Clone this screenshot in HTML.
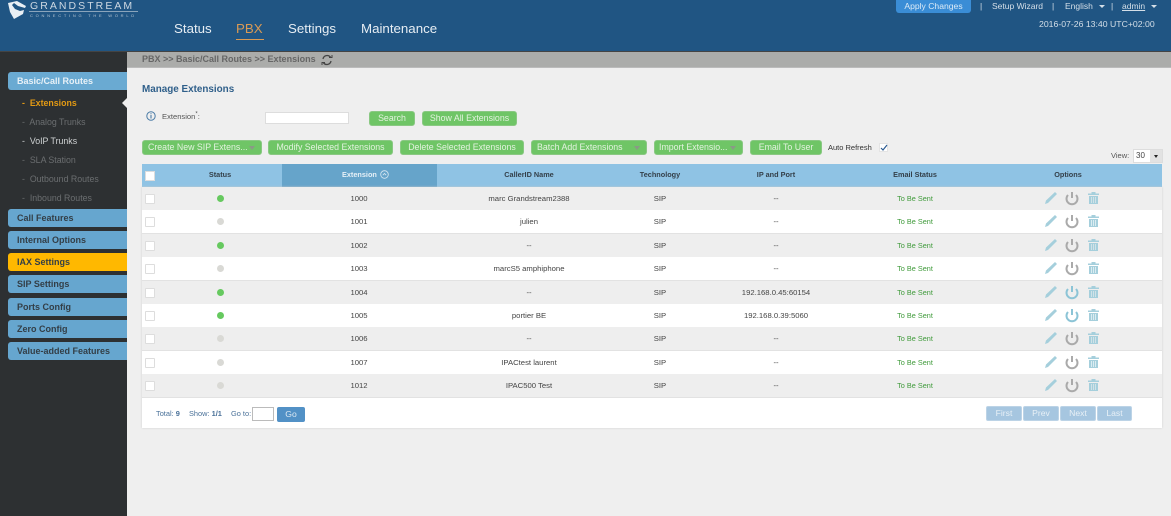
<!DOCTYPE html>
<html><head><meta charset="utf-8">
<style>
html,body{margin:0;padding:0;width:1171px;height:516px;overflow:hidden;background:#efefef;font-family:"Liberation Sans",sans-serif}
.a{position:absolute;white-space:nowrap}
#hd{left:0;top:0;width:1171px;height:51px;background:#205583;border-bottom:1px solid #444}
#sb{left:0;top:52px;width:127px;height:464px;background:#2d3032}
#bc{left:127px;top:52px;width:1044px;height:15px;background:#abacaa;border-bottom:1px solid #bbb;font-size:9px;font-weight:bold;color:#666;line-height:15px;text-indent:15px}
.nav{font-size:13.3px;color:#e6edf3;top:21px;line-height:16px}
.tp{font-size:8.5px;color:#d5dfe8;top:0;line-height:12px}
.m{left:8px;width:119px;height:18px;background:#66a6cf;border-radius:3px 0 0 3px;font-size:9px;font-weight:bold;color:#333e46;line-height:18px;text-indent:9px}
.s{left:22px;font-size:8.8px;color:#6b6e70;line-height:12px}
.b{height:13px;background:#6fc566;border:1px solid #8ac883;border-radius:3px;color:#e3f2df;font-size:8.8px;line-height:13px;text-align:center}
.ar{position:absolute;right:6px;top:5px;width:0;height:0;border-left:3px solid transparent;border-right:3px solid transparent;border-top:4px solid #8a9a86}
.r{left:142px;width:1020px;height:23px;border-bottom:1px solid #e2e2e2}
.g{background:#eee}.w{background:#fff}
.c{position:absolute;top:0;line-height:23px;font-size:7.7px;color:#444;text-align:center;transform:translateX(-50%);white-space:nowrap}
.e{color:#3f9a3a;font-size:7.3px}
.cb{position:absolute;left:3px;top:7px;width:8px;height:8px;background:#fff;border:1px solid #ddd;border-radius:1px}
.d{position:absolute;left:75px;top:8px;width:7px;height:7px;border-radius:50%}
.on{background:#66c95f}.off{background:#d9d9d5}
.h{font-size:7.3px;font-weight:bold;color:#34404a;line-height:22px;top:164px;transform:translateX(-50%)}
.p{height:13px;background:#a6c6e0;border:1px solid #bcd3e6;border-radius:2px;color:#e8f0f6;font-size:8.6px;line-height:13px;text-align:center;top:406px}
.ft{font-size:7.4px;color:#4a7199;line-height:11px;top:408px}
svg.ic{position:absolute;left:902px;top:3px}
</style></head><body>
<div class="a" id="hd"></div>
<svg class="a" style="left:7px;top:0" width="20" height="20" viewBox="0 0 20 20"><path d="M1 3 L10 1 L19 6 L18 8 L11 6 L7 3 L5 5 L8 9 L13 11 L17 10 L16 14 L7 19 L3 12 Z" fill="#e9eff4"/></svg>
<div class="a" style="left:30px;top:0;font-size:10.5px;letter-spacing:2.05px;color:#cdd8e2;line-height:13px">GRANDSTREAM</div>
<div class="a" style="left:29px;top:11px;width:109px;height:1px;background:#8aa4bb"></div>
<div class="a" style="left:30px;top:13px;font-size:4px;letter-spacing:2.75px;color:#b5c5d3;line-height:5px">CONNECTING THE WORLD</div>
<div class="a nav" style="left:174px">Status</div>
<div class="a nav" style="left:236px;color:#d99a55">PBX</div>
<div class="a" style="left:236px;top:39px;width:28px;height:1px;background:#d99a55"></div>
<div class="a nav" style="left:288px">Settings</div>
<div class="a nav" style="left:361px">Maintenance</div>
<div class="a" style="left:896px;top:0;width:75px;height:13px;background:#3a8dd6;border-radius:0 0 3px 3px;color:#dcebf7;font-size:8.6px;line-height:12px;text-align:center">Apply Changes</div>
<div class="a tp" style="left:980px">|</div>
<div class="a tp" style="left:992px">Setup Wizard</div>
<div class="a tp" style="left:1052px">|</div>
<div class="a tp" style="left:1065px">English</div>
<div class="a" style="left:1099px;top:5px;border-left:3px solid transparent;border-right:3px solid transparent;border-top:3px solid #d5dfe8"></div>
<div class="a tp" style="left:1111px">|</div>
<div class="a tp" style="left:1122px;text-decoration:underline">admin</div>
<div class="a" style="left:1151px;top:5px;border-left:3px solid transparent;border-right:3px solid transparent;border-top:3px solid #d5dfe8"></div>
<div class="a tp" style="left:1039px;top:18px;font-size:8.7px">2016-07-26 13:40 UTC+02:00</div>

<div class="a" id="sb"></div>
<div class="a" id="bc">PBX &gt;&gt; Basic/Call Routes &gt;&gt; Extensions</div>
<svg class="a" style="left:321px;top:54px" width="12" height="12" viewBox="0 0 12 12" fill="none" stroke="#444" stroke-width="1.3"><path d="M2 5 A4.2 4.2 0 0 1 9.5 3.2"/><path d="M10 7 A4.2 4.2 0 0 1 2.5 8.8"/><path d="M8 3.500h3v-2.500" stroke-width="1"/><path d="M4 8.500H1v2.500" stroke-width="1"/></svg>

<div class="a m" style="top:72px;background:#6aaad2;color:#e8f1f7">Basic/Call Routes</div>
<div class="a s" style="top:97px;color:#e39a14;font-weight:bold">-&nbsp; Extensions</div>
<div class="a" style="left:122px;top:98px;border-top:5px solid transparent;border-bottom:5px solid transparent;border-right:5px solid #efefef"></div>
<div class="a s" style="top:116px">-&nbsp; Analog Trunks</div>
<div class="a s" style="top:135px;color:#cfd2d3">-&nbsp; VoIP Trunks</div>
<div class="a s" style="top:154px">-&nbsp; SLA Station</div>
<div class="a s" style="top:173px">-&nbsp; Outbound Routes</div>
<div class="a s" style="top:192px">-&nbsp; Inbound Routes</div>
<div class="a m" style="top:209px">Call Features</div>
<div class="a m" style="top:231px">Internal Options</div>
<div class="a m" style="top:253px;background:#ffb800">IAX Settings</div>
<div class="a m" style="top:275px">SIP Settings</div>
<div class="a m" style="top:298px">Ports Config</div>
<div class="a m" style="top:320px">Zero Config</div>
<div class="a m" style="top:342px">Value-added Features</div>

<div class="a" style="left:142px;top:83px;font-size:9.9px;font-weight:bold;color:#2f5f8a;line-height:13px">Manage Extensions</div>
<svg class="a" style="left:146px;top:111px" width="10" height="10" viewBox="0 0 10 10"><circle cx="5" cy="5" r="4.2" fill="none" stroke="#4a7ba6"/><path d="M5 4v3.500M5 2.200v1" stroke="#4a7ba6" stroke-width="1.100"/></svg>
<div class="a" style="left:162px;top:111px;font-size:7.6px;color:#555;line-height:11px">Extension<sup style="font-size:6px;line-height:0">*</sup>:</div>
<div class="a" style="left:265px;top:112px;width:82px;height:10px;background:#fff;border:1px solid #ddd"></div>
<div class="a b" style="left:369px;top:111px;width:44px">Search</div>
<div class="a b" style="left:422px;top:111px;width:93px">Show All Extensions</div>

<div class="a b" style="left:142px;top:140px;width:118px;text-align:left;text-indent:5px">Create New SIP Extens...<i class="ar"></i></div>
<div class="a b" style="left:268px;top:140px;width:123px">Modify Selected Extensions</div>
<div class="a b" style="left:400px;top:140px;width:122px">Delete Selected Extensions</div>
<div class="a b" style="left:531px;top:140px;width:114px;text-align:left;text-indent:5px">Batch Add Extensions<i class="ar"></i></div>
<div class="a b" style="left:654px;top:140px;width:87px;text-align:left;text-indent:4px">Import Extensio...<i class="ar"></i></div>
<div class="a b" style="left:750px;top:140px;width:70px">Email To User</div>
<div class="a" style="left:828px;top:142px;font-size:7.500px;color:#333;line-height:11px">Auto Refresh</div>
<div class="a" style="left:879px;top:143px;width:7px;height:7px;background:#fff;border:1px solid #e4e4e4"></div>
<svg class="a" style="left:880px;top:144px" width="8" height="8" viewBox="0 0 8 8"><path d="M1 4l2 2 4-5" fill="none" stroke="#2c5c92" stroke-width="1.200"/></svg>
<div class="a" style="left:1111px;top:150px;font-size:7.500px;color:#555;line-height:11px">View:</div>
<div class="a" style="left:1133px;top:149px;width:28px;height:12px;background:#fff;border:1px solid #ddd;font-size:8px;color:#444;line-height:12px;text-indent:2px">30</div>
<div class="a" style="left:1150px;top:150px;width:12px;height:12px;background:#e2e2e2"></div>
<div class="a" style="left:1154px;top:155px;border-left:2.500px solid transparent;border-right:2.500px solid transparent;border-top:3px solid #222"></div>

<div class="a" style="left:142px;top:164px;width:1020px;height:23px;background:#8fc3e4"></div>
<div class="a" style="left:282px;top:164px;width:155px;height:23px;background:#66a4ca"></div>
<div class="a" style="left:145px;top:171px;width:8px;height:8px;background:#fff;border:1px solid #ddd"></div>
<div class="a h" style="left:220px">Status</div>
<div class="a h" style="left:342px;color:#e6f0f7;transform:none">Extension</div>
<svg class="a" style="left:380px;top:170px" width="9" height="9" viewBox="0 0 9 9" fill="none" stroke="#d8e8f2" stroke-width=".8"><circle cx="4.500" cy="4.500" r="3.800"/><path d="M2.800 5.200l1.700-1.700 1.700 1.700"/></svg>
<div class="a h" style="left:529px">CallerID Name</div>
<div class="a h" style="left:660px">Technology</div>
<div class="a h" style="left:776px">IP and Port</div>
<div class="a h" style="left:915px">Email Status</div>
<div class="a h" style="left:1068px">Options</div>

<div class="a" style="left:142px;top:187px;width:1020px;height:241px;background:#fff;box-shadow:0 0 2px #ccc"></div>

<div class="a r g" style="top:187px"><i class="cb"></i><i class="d on"></i><div class="c" style="left:217px">1000</div><div class="c" style="left:387px">marc Grandstream2388</div><div class="c" style="left:518px">SIP</div><div class="c" style="left:634px">--</div><div class="c e" style="left:773px">To Be Sent</div><svg class="ic" width="56" height="18" viewBox="0 0 56 18"><path d="M1 14l1-3.500L11 2l2 2-9 9z" fill="#a5cfdc"/><path d="M28 2v6" stroke="#aaa" stroke-width="2"/><path d="M24 5a5.500 5.500 0 1 0 8 0" fill="none" stroke="#aaa" stroke-width="2"/><path d="M44 3.500h11v1.500H44zM47.500 2h4v1.500h-4zM45 6h9v8h-9z" fill="#a5cfdc"/><path d="M47.300 7v6M49.500 7v6M51.700 7v6" stroke="#eee" stroke-width=".6"/></svg></div>
<div class="a r w" style="top:210px"><i class="cb"></i><i class="d off"></i><div class="c" style="left:217px">1001</div><div class="c" style="left:387px">julien</div><div class="c" style="left:518px">SIP</div><div class="c" style="left:634px">--</div><div class="c e" style="left:773px">To Be Sent</div><svg class="ic" width="56" height="18" viewBox="0 0 56 18"><path d="M1 14l1-3.500L11 2l2 2-9 9z" fill="#a5cfdc"/><path d="M28 2v6" stroke="#aaa" stroke-width="2"/><path d="M24 5a5.500 5.500 0 1 0 8 0" fill="none" stroke="#aaa" stroke-width="2"/><path d="M44 3.500h11v1.500H44zM47.500 2h4v1.500h-4zM45 6h9v8h-9z" fill="#a5cfdc"/><path d="M47.300 7v6M49.500 7v6M51.700 7v6" stroke="#fff" stroke-width=".6"/></svg></div>
<div class="a r g" style="top:234px"><i class="cb"></i><i class="d on"></i><div class="c" style="left:217px">1002</div><div class="c" style="left:387px">--</div><div class="c" style="left:518px">SIP</div><div class="c" style="left:634px">--</div><div class="c e" style="left:773px">To Be Sent</div><svg class="ic" width="56" height="18" viewBox="0 0 56 18"><path d="M1 14l1-3.500L11 2l2 2-9 9z" fill="#a5cfdc"/><path d="M28 2v6" stroke="#aaa" stroke-width="2"/><path d="M24 5a5.500 5.500 0 1 0 8 0" fill="none" stroke="#aaa" stroke-width="2"/><path d="M44 3.500h11v1.500H44zM47.500 2h4v1.500h-4zM45 6h9v8h-9z" fill="#a5cfdc"/><path d="M47.300 7v6M49.500 7v6M51.700 7v6" stroke="#eee" stroke-width=".6"/></svg></div>
<div class="a r w" style="top:257px"><i class="cb"></i><i class="d off"></i><div class="c" style="left:217px">1003</div><div class="c" style="left:387px">marcS5 amphiphone</div><div class="c" style="left:518px">SIP</div><div class="c" style="left:634px">--</div><div class="c e" style="left:773px">To Be Sent</div><svg class="ic" width="56" height="18" viewBox="0 0 56 18"><path d="M1 14l1-3.500L11 2l2 2-9 9z" fill="#a5cfdc"/><path d="M28 2v6" stroke="#aaa" stroke-width="2"/><path d="M24 5a5.500 5.500 0 1 0 8 0" fill="none" stroke="#aaa" stroke-width="2"/><path d="M44 3.500h11v1.500H44zM47.500 2h4v1.500h-4zM45 6h9v8h-9z" fill="#a5cfdc"/><path d="M47.300 7v6M49.500 7v6M51.700 7v6" stroke="#fff" stroke-width=".6"/></svg></div>
<div class="a r g" style="top:281px"><i class="cb"></i><i class="d on"></i><div class="c" style="left:217px">1004</div><div class="c" style="left:387px">--</div><div class="c" style="left:518px">SIP</div><div class="c" style="left:634px">192.168.0.45:60154</div><div class="c e" style="left:773px">To Be Sent</div><svg class="ic" width="56" height="18" viewBox="0 0 56 18"><path d="M1 14l1-3.500L11 2l2 2-9 9z" fill="#a5cfdc"/><path d="M28 2v6" stroke="#8cc4d6" stroke-width="2"/><path d="M24 5a5.500 5.500 0 1 0 8 0" fill="none" stroke="#8cc4d6" stroke-width="2"/><path d="M44 3.500h11v1.500H44zM47.500 2h4v1.500h-4zM45 6h9v8h-9z" fill="#a5cfdc"/><path d="M47.300 7v6M49.500 7v6M51.700 7v6" stroke="#eee" stroke-width=".6"/></svg></div>
<div class="a r w" style="top:304px"><i class="cb"></i><i class="d on"></i><div class="c" style="left:217px">1005</div><div class="c" style="left:387px">portier BE</div><div class="c" style="left:518px">SIP</div><div class="c" style="left:634px">192.168.0.39:5060</div><div class="c e" style="left:773px">To Be Sent</div><svg class="ic" width="56" height="18" viewBox="0 0 56 18"><path d="M1 14l1-3.500L11 2l2 2-9 9z" fill="#a5cfdc"/><path d="M28 2v6" stroke="#8cc4d6" stroke-width="2"/><path d="M24 5a5.500 5.500 0 1 0 8 0" fill="none" stroke="#8cc4d6" stroke-width="2"/><path d="M44 3.500h11v1.500H44zM47.500 2h4v1.500h-4zM45 6h9v8h-9z" fill="#a5cfdc"/><path d="M47.300 7v6M49.500 7v6M51.700 7v6" stroke="#fff" stroke-width=".6"/></svg></div>
<div class="a r g" style="top:327px"><i class="cb"></i><i class="d off"></i><div class="c" style="left:217px">1006</div><div class="c" style="left:387px">--</div><div class="c" style="left:518px">SIP</div><div class="c" style="left:634px">--</div><div class="c e" style="left:773px">To Be Sent</div><svg class="ic" width="56" height="18" viewBox="0 0 56 18"><path d="M1 14l1-3.500L11 2l2 2-9 9z" fill="#a5cfdc"/><path d="M28 2v6" stroke="#aaa" stroke-width="2"/><path d="M24 5a5.500 5.500 0 1 0 8 0" fill="none" stroke="#aaa" stroke-width="2"/><path d="M44 3.500h11v1.500H44zM47.500 2h4v1.500h-4zM45 6h9v8h-9z" fill="#a5cfdc"/><path d="M47.300 7v6M49.500 7v6M51.700 7v6" stroke="#eee" stroke-width=".6"/></svg></div>
<div class="a r w" style="top:351px"><i class="cb"></i><i class="d off"></i><div class="c" style="left:217px">1007</div><div class="c" style="left:387px">IPACtest laurent</div><div class="c" style="left:518px">SIP</div><div class="c" style="left:634px">--</div><div class="c e" style="left:773px">To Be Sent</div><svg class="ic" width="56" height="18" viewBox="0 0 56 18"><path d="M1 14l1-3.500L11 2l2 2-9 9z" fill="#a5cfdc"/><path d="M28 2v6" stroke="#aaa" stroke-width="2"/><path d="M24 5a5.500 5.500 0 1 0 8 0" fill="none" stroke="#aaa" stroke-width="2"/><path d="M44 3.500h11v1.500H44zM47.500 2h4v1.500h-4zM45 6h9v8h-9z" fill="#a5cfdc"/><path d="M47.300 7v6M49.500 7v6M51.700 7v6" stroke="#fff" stroke-width=".6"/></svg></div>
<div class="a r g" style="top:374px"><i class="cb"></i><i class="d off"></i><div class="c" style="left:217px">1012</div><div class="c" style="left:387px">IPAC500 Test</div><div class="c" style="left:518px">SIP</div><div class="c" style="left:634px">--</div><div class="c e" style="left:773px">To Be Sent</div><svg class="ic" width="56" height="18" viewBox="0 0 56 18"><path d="M1 14l1-3.500L11 2l2 2-9 9z" fill="#a5cfdc"/><path d="M28 2v6" stroke="#aaa" stroke-width="2"/><path d="M24 5a5.500 5.500 0 1 0 8 0" fill="none" stroke="#aaa" stroke-width="2"/><path d="M44 3.500h11v1.500H44zM47.500 2h4v1.500h-4zM45 6h9v8h-9z" fill="#a5cfdc"/><path d="M47.300 7v6M49.500 7v6M51.700 7v6" stroke="#eee" stroke-width=".6"/></svg></div>

<div class="a ft" style="left:156px">Total: <b>9</b></div>
<div class="a ft" style="left:189px">Show: <b>1/1</b></div>
<div class="a ft" style="left:231px">Go to:</div>
<div class="a" style="left:252px;top:407px;width:20px;height:12px;background:#fff;border:1px solid #bbb"></div>
<div class="a" style="left:277px;top:407px;width:28px;height:15px;background:#5291c6;border-radius:2px;color:#dce8f2;font-size:8.6px;line-height:15px;text-align:center">Go</div>
<div class="a p" style="left:986px;width:34px">First</div>
<div class="a p" style="left:1023px;width:34px">Prev</div>
<div class="a p" style="left:1060px;width:34px">Next</div>
<div class="a p" style="left:1097px;width:33px">Last</div>
</body></html>
